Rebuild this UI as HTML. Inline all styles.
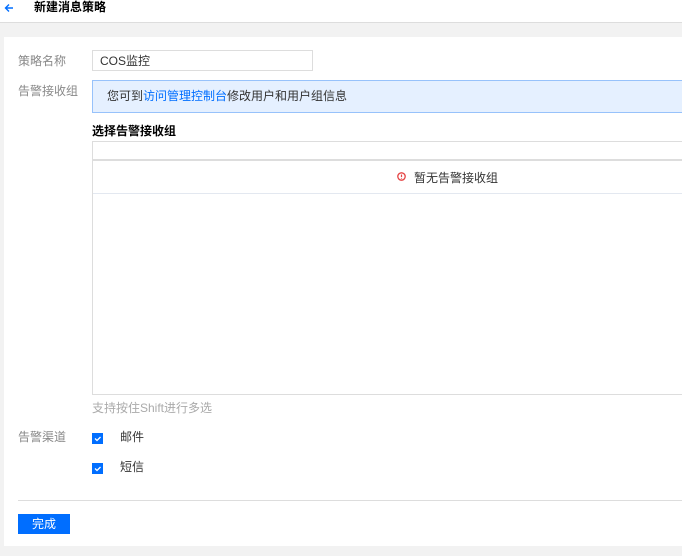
<!DOCTYPE html>
<html><head><meta charset="utf-8"><style>
*{margin:0;padding:0;box-sizing:border-box}
body{width:682px;height:556px;background:#f2f2f2;font-family:"Liberation Sans","Noto Sans CJK SC",sans-serif;font-size:12px;color:#333;position:relative;overflow:hidden}
.hd{position:absolute;left:0;top:0;width:682px;height:23px;background:#fff;border-bottom:1px solid #ddd}
.hd .t{position:absolute;left:34px;top:-2px;font-weight:bold;font-size:12px;color:#000}
.card{position:absolute;left:4px;top:37px;width:690px;height:509px;background:#fff}
.a{position:absolute}
.lab{color:#888}
</style></head><body>
<div class="hd">
<svg class="a" style="left:4px;top:3px" width="10" height="10" viewBox="0 0 10 10"><path d="M9 5H1.5M5 1.5L1.5 5 5 8.5" stroke="#006eff" stroke-width="1.4" fill="none"/></svg>
<div class="t">新建消息策略</div>
</div>
<div class="card"></div>
<div class="a lab" style="left:18px;top:52px">策略名称</div>
<div class="a" style="left:92px;top:50px;width:221px;height:21px;border:1px solid #ddd;padding:1px 0 0 7px;color:#333">COS监控</div>
<div class="a lab" style="left:18px;top:82px">告警接收组</div>
<div class="a" style="left:92px;top:80px;width:600px;height:33px;background:#e5f0ff;border:1px solid #97c2fb;padding:7px 0 0 14px;line-height:17px">您可到<span style="color:#006eff">访问管理控制台</span>修改用户和用户组信息</div>
<div class="a" style="left:92px;top:122px;font-weight:bold;color:#000">选择告警接收组</div>
<div class="a" style="left:92px;top:141px;width:600px;height:254px;border:1px solid #ddd"></div>
<div class="a" style="left:93px;top:159px;width:600px;height:2px;background:#ddd"></div>
<div class="a" style="left:93px;top:193px;width:600px;height:1px;background:#e3e8f0"></div>
<svg class="a" style="left:397px;top:172px" width="9" height="9" viewBox="0 0 9 9"><circle cx="4.5" cy="4.5" r="3.7" stroke="#e54545" stroke-width="1.3" fill="none"/><path d="M4.5 2.5v2.6M4.5 6v.6" stroke="#e54545" stroke-width="1.2"/></svg>
<div class="a" style="left:414px;top:169px">暂无告警接收组</div>
<div class="a" style="left:92px;top:399px;color:#aaa">支持按住Shift进行多选</div>
<div class="a lab" style="left:18px;top:428px">告警渠道</div>
<div class="a" style="left:92px;top:433px;width:11px;height:11px;background:#006eff"><svg width="11" height="11"><path d="M3 5.5l2 2 3.5-3.5" stroke="#fff" stroke-width="1.3" fill="none"/></svg></div>
<div class="a" style="left:120px;top:428px">邮件</div>
<div class="a" style="left:92px;top:463px;width:11px;height:11px;background:#006eff"><svg width="11" height="11"><path d="M3 5.5l2 2 3.5-3.5" stroke="#fff" stroke-width="1.3" fill="none"/></svg></div>
<div class="a" style="left:120px;top:458px">短信</div>
<div class="a" style="left:18px;top:500px;width:670px;height:1px;background:#ddd"></div>
<div class="a" style="left:18px;top:514px;width:52px;height:20px;background:#006eff;color:#fff;text-align:center;line-height:20px">完成</div>
</body></html>
